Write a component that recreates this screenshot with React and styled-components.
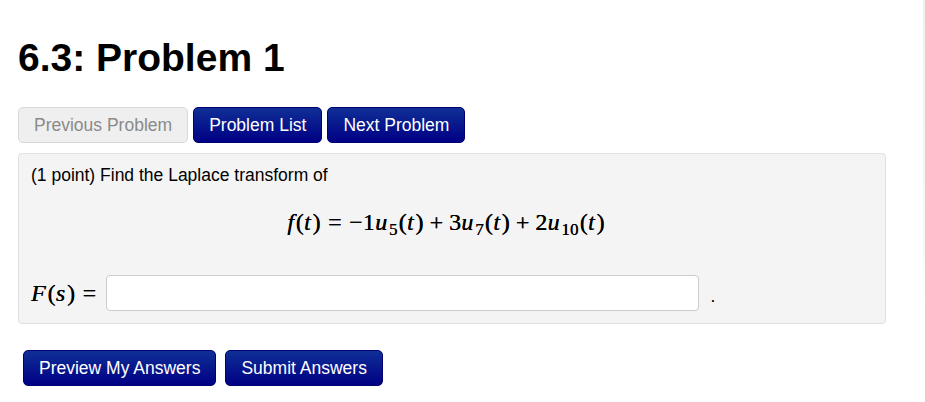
import React from "react";
import styled, { createGlobalStyle } from "styled-components";

const Global = createGlobalStyle`
  html, body { margin: 0; padding: 0; background: #fff; }
  body { font-family: "Liberation Sans", Arial, sans-serif; color: #000; }
`;

const Page = styled.div`
  padding: 34px 0 0 18px;
  width: 868px;
`;

const EdgeShade = styled.div`
  position: fixed;
  top: 0;
  right: 0;
  width: 2px;
  height: 310px;
  background: linear-gradient(to bottom, #f1f1f1, #f7f7f7 80%, #fff);
`;

const Title = styled.h2`
  margin: 0;
  font-size: 39px;
  line-height: 48px;
  font-weight: 700;
`;

const NavRow = styled.div`
  display: flex;
  gap: 5px;
  margin-top: 25px;
`;

const Button = styled.button`
  font-family: "Liberation Sans", Arial, sans-serif;
  font-size: 17.5px;
  line-height: 24px;
  padding: 5px 15px;
  border-radius: 5px;
  cursor: pointer;
  border: 1px solid ${(p) => (p.$disabled ? "#d8d8d8" : "#000070")};
  color: ${(p) => (p.$disabled ? "#8a8a8a" : "#fff")};
  background: ${(p) =>
    p.$disabled ? "#efefef" : "linear-gradient(to bottom, #0f2f96, #000084)"};
`;

const ProblemBox = styled.div`
  margin-top: 10px;
  border: 1px solid #e0e0e0;
  border-radius: 4px;
  background: #f4f4f4;
  padding: 9px 12px 12px;
  font-size: 17.5px;
  line-height: 25px;
`;

const Intro = styled.div``;

const MathDisplay = styled.div`
  margin-top: 17px;
  height: 34px;
  display: flex;
  align-items: center;
  justify-content: center;
  padding-right: 12px;
`;

const MathText = styled.span`
  font-family: "Liberation Serif", "Times New Roman", serif;
  font-size: 24px;
  letter-spacing: 0.3px;
  white-space: nowrap;
  color: #000;
  text-shadow: 0.3px 0 0 #000;
`;

const V = styled.i`
  font-family: "Liberation Serif", "Times New Roman", serif;
  font-style: italic;
  padding-right: 1.5px;
`;

const Sub = styled.sub`
  font-size: 0.7em;
  vertical-align: -0.3em;
  line-height: 0;
  font-style: normal;
  margin-right: 1px;
`;

const Op = styled.span`
  margin: 0 ${(p) => p.$space || 0.24}em;
`;

const AnswerRow = styled.div`
  margin-top: 36px;
  display: flex;
  align-items: center;
`;

const Label = styled(MathText)`
  margin-right: 3px;
`;

const Input = styled.input`
  box-sizing: border-box;
  width: 593px;
  height: 36px;
  border: 1px solid #cccccc;
  border-radius: 4px;
  background: #fff;
  outline: none;
  padding: 4px 8px;
  font-size: 16px;
`;

const Period = styled.span`
  margin-left: 11px;
  font-size: 17.5px;
  position: relative;
  top: 3px;
`;

const SubmitRow = styled.div`
  display: flex;
  gap: 9px;
  margin: 26px 0 0 5px;
`;

export default function App() {
  return (
    <>
      <Global />
      <EdgeShade />
      <Page>
        <Title>6.3: Problem 1</Title>
        <NavRow>
          <Button $disabled>Previous Problem</Button>
          <Button>Problem List</Button>
          <Button>Next Problem</Button>
        </NavRow>
        <ProblemBox>
          <Intro>(1 point) Find the Laplace transform of</Intro>
          <MathDisplay>
            <MathText>
              <V>f</V>(<V>t</V>)<Op $space={0.3}>=</Op>−1<V>u</V>
              <Sub>5</Sub>(<V>t</V>)<Op>+</Op>3<V>u</V>
              <Sub>7</Sub>(<V>t</V>)<Op>+</Op>2<V>u</V>
              <Sub>10</Sub>(<V>t</V>)
            </MathText>
          </MathDisplay>
          <AnswerRow>
            <Label>
              <V>F</V>(<V>s</V>)<Op $space={0.3}>=</Op>
            </Label>
            <Input type="text" />
            <Period>.</Period>
          </AnswerRow>
        </ProblemBox>
        <SubmitRow>
          <Button>Preview My Answers</Button>
          <Button>Submit Answers</Button>
        </SubmitRow>
      </Page>
    </>
  );
}
